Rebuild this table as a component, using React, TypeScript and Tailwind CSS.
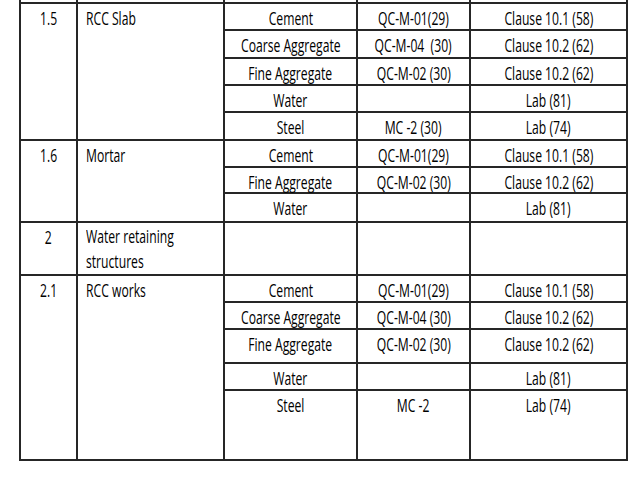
import React from 'react';

type Sub = { material: string; code: string; clause: string; h: number };
type Item = { no: string; name: string[]; subs: Sub[] };

const items: Item[] = [
  {
    no: '1.5',
    name: ['RCC Slab'],
    subs: [
      { material: 'Cement', code: 'QC-M-01(29)', clause: 'Clause 10.1 (58)', h: 27 },
      { material: 'Coarse Aggregate', code: 'QC-M-04\u00a0 (30)', clause: 'Clause 10.2 (62)', h: 28 },
      { material: 'Fine Aggregate', code: 'QC-M-02 (30)', clause: 'Clause 10.2 (62)', h: 27 },
      { material: 'Water', code: '', clause: 'Lab (81)', h: 27 },
      { material: 'Steel', code: 'MC -2 (30)', clause: 'Lab (74)', h: 28 },
    ],
  },
  {
    no: '1.6',
    name: ['Mortar'],
    subs: [
      { material: 'Cement', code: 'QC-M-01(29)', clause: 'Clause 10.1 (58)', h: 27 },
      { material: 'Fine Aggregate', code: 'QC-M-02 (30)', clause: 'Clause 10.2 (62)', h: 26 },
      { material: 'Water', code: '', clause: 'Lab (81)', h: 29 },
    ],
  },
  {
    no: '2',
    name: ['Water retaining', 'structures'],
    subs: [{ material: '', code: '', clause: '', h: 53 }],
  },
  {
    no: '2.1',
    name: ['RCC works'],
    subs: [
      { material: 'Cement', code: 'QC-M-01(29)', clause: 'Clause 10.1 (58)', h: 27 },
      { material: 'Coarse Aggregate', code: 'QC-M-04 (30)', clause: 'Clause 10.2 (62)', h: 27 },
      { material: 'Fine Aggregate', code: 'QC-M-02 (30)', clause: 'Clause 10.2 (62)', h: 34 },
      { material: 'Water', code: '', clause: 'Lab (81)', h: 27 },
      { material: 'Steel', code: 'MC -2', clause: 'Lab (74)', h: 70 },
    ],
  },
];

const border = 'border-2 border-[#262626] align-top p-0';
const cell = `${border} pt-[4px]`;

// the slide text is squeezed sideways, so each label is narrowed with scale-x
const Centered = ({ text }: { text: string }) => (
  <div className="flex justify-center">
    <span className="whitespace-nowrap scale-x-[0.675] origin-center">{text}</span>
  </div>
);

export default function App() {
  return (
    <div
      className="w-[638px] h-[478px] bg-white overflow-hidden pl-[19px] text-[18px] leading-[20px] font-medium text-black"
      style={{ fontFamily: '"Open Sans", "Noto Sans", sans-serif' }}
    >
      <table className="border-collapse table-fixed w-[607px]">
        <colgroup>
          <col className="w-[57px]" />
          <col className="w-[147px]" />
          <col className="w-[133px]" />
          <col className="w-[113px]" />
          <col className="w-[157px]" />
        </colgroup>
        <tbody>
          <tr className="h-[3px]">
            {[0, 1, 2, 3, 4].map((i) => (
              <td key={i} className="border-2 border-[#262626] border-t-0 p-0 leading-none h-[3px]" />
            ))}
          </tr>
          {items.map((item) =>
            item.subs.map((s, i) => (
              <tr key={item.no + i} style={{ height: s.h }}>
                {i === 0 && (
                  <>
                    <td rowSpan={item.subs.length} className={cell}>
                      <Centered text={item.no} />
                    </td>
                    <td
                      rowSpan={item.subs.length}
                      className={item.name.length > 1 ? `${border} pl-2 pt-[1px] leading-[25px]` : `${cell} pl-2`}
                    >
                      {item.name.map((line) => (
                        <div key={line} className="whitespace-nowrap scale-x-[0.675] origin-left">
                          {line}
                        </div>
                      ))}
                    </td>
                  </>
                )}
                <td className={cell}>
                  <Centered text={s.material} />
                </td>
                <td className={cell}>
                  <Centered text={s.code} />
                </td>
                <td className={cell}>
                  <Centered text={s.clause} />
                </td>
              </tr>
            ))
          )}
        </tbody>
      </table>
    </div>
  );
}
